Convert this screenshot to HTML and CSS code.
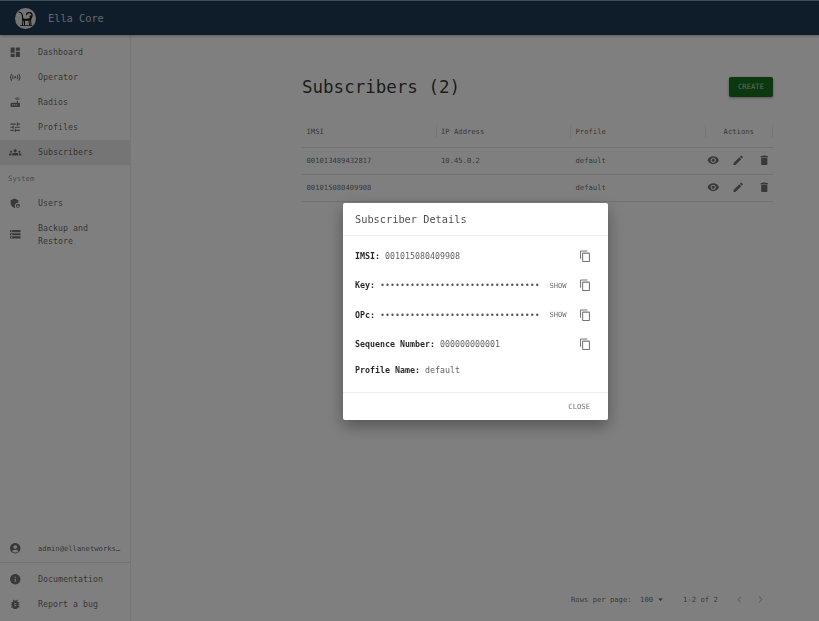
FILE: index.html
```html
<!DOCTYPE html>
<html lang="en">
<head>
<meta charset="utf-8">
<title>Ella Core – Subscribers</title>
<link rel="stylesheet" href="styles.css">
</head>
<body>
<svg class="sprite" aria-hidden="true">
  <symbol id="i-dashboard" viewBox="0 0 24 24"><path d="M3 13h8V3H3zm0 8h8v-6H3zm10 0h8V11h-8zm0-18v6h8V3z"/></symbol>
  <symbol id="i-sensors" viewBox="0 0 24 24"><path d="M7.76 16.24C6.67 15.16 6 13.66 6 12s.67-3.16 1.76-4.24l1.42 1.42C8.45 9.9 8 10.9 8 12c0 1.1.45 2.1 1.17 2.83zm8.48 0C17.33 15.16 18 13.66 18 12s-.67-3.16-1.76-4.24l-1.42 1.42C15.55 9.9 16 10.9 16 12c0 1.1-.45 2.1-1.17 2.83zM12 10c-1.1 0-2 .9-2 2s.9 2 2 2 2-.9 2-2-.9-2-2-2m8 2c0 2.21-.9 4.21-2.35 5.65l1.42 1.42C20.88 17.26 22 14.76 22 12s-1.12-5.26-2.93-7.07l-1.42 1.42C19.1 7.79 20 9.79 20 12M6.35 6.35 4.93 4.93C3.12 6.74 2 9.24 2 12s1.12 5.26 2.93 7.07l1.42-1.42C4.9 16.21 4 14.21 4 12s.9-4.21 2.35-5.65"/></symbol>
  <symbol id="i-router" viewBox="0 0 24 24"><path d="M20.2 5.9l.8-.8C19.6 3.7 17.8 3 16 3s-3.6.7-5 2.1l.8.8C13 4.8 14.5 4.2 16 4.2s3 .6 4.2 1.7zm-.9.8c-.9-.9-2.1-1.4-3.3-1.4s-2.4.5-3.3 1.4l.8.8c.7-.7 1.6-1 2.5-1 .9 0 1.8.3 2.5 1l.8-.8zM19 13h-2V9h-2v4H5c-1.1 0-2 .9-2 2v4c0 1.1.9 2 2 2h14c1.1 0 2-.9 2-2v-4c0-1.1-.9-2-2-2zM8 18H6v-2h2v2zm3.500 0h-2v-2h2v2zm3.500 0h-2v-2h2v2z"/></symbol>
  <symbol id="i-tune" viewBox="0 0 24 24"><path d="M3 17v2h6v-2zM3 5v2h10V5zm10 16v-2h8v-2h-8v-2h-2v6zM7 9v2H3v2h4v2h2V9zm14 4v-2H11v2zm-6-4h2V7h4V5h-4V3h-2z"/></symbol>
  <symbol id="i-groups" viewBox="0 0 24 24"><path d="M12 12.75c1.63 0 3.07.39 4.24.9 1.08.48 1.76 1.56 1.76 2.73V18H6v-1.61c0-1.18.68-2.26 1.76-2.73 1.17-.52 2.61-.91 4.24-.91M4 13c1.1 0 2-.9 2-2s-.9-2-2-2-2 .9-2 2 .9 2 2 2m1.130 1.100c-.37-.06-.74-.1-1.130-.1-.99 0-1.930.21-2.780.58C.48 14.900 0 15.620 0 16.430V18h4.500v-1.610c0-.83.23-1.610.63-2.290M20 13c1.100 0 2-.9 2-2s-.9-2-2-2-2 .9-2 2 .9 2 2 2m4 3.430c0-.81-.48-1.530-1.220-1.850-.85-.37-1.790-.58-2.780-.58-.39 0-.76.04-1.130.1.4.68.63 1.460.63 2.290V18H24zM12 6c1.660 0 3 1.340 3 3s-1.340 3-3 3-3-1.340-3-3 1.340-3 3-3"/></symbol>
  <symbol id="i-admin" viewBox="0 0 24 24"><path d="M17 11c.34 0 .67.04 1 .09V6.270L10.500 3 3 6.270v4.910c0 4.540 3.200 8.790 7.500 9.820.55-.13 1.080-.32 1.600-.55-.69-.98-1.100-2.170-1.100-3.450 0-3.310 2.690-6 6-6"/><path d="M17 13c-2.210 0-4 1.790-4 4s1.790 4 4 4 4-1.790 4-4-1.790-4-4-4m0 1.380c.62 0 1.120.51 1.120 1.120s-.51 1.120-1.120 1.120-1.120-.51-1.120-1.120.5-1.120 1.120-1.120m0 5.370c-.93 0-1.740-.46-2.240-1.170.05-.72 1.510-1.080 2.240-1.080s2.190.36 2.240 1.080c-.5.71-1.310 1.170-2.240 1.170"/></symbol>
  <symbol id="i-storage" viewBox="0 0 24 24"><path d="M2 20h20v-4H2zm2-3h2v2H4zM2 4v4h20V4zm4 3H4V5h2zm-4 7h20v-4H2zm2-3h2v2H4z"/></symbol>
  <symbol id="i-account" viewBox="0 0 24 24"><path d="M12 2C6.480 2 2 6.480 2 12s4.480 10 10 10 10-4.480 10-10S17.520 2 12 2m0 4c1.930 0 3.500 1.570 3.500 3.500S13.930 13 12 13s-3.500-1.570-3.500-3.500S10.070 6 12 6m0 14c-2.030 0-4.430-.82-6.140-2.880C7.550 15.800 9.680 15 12 15s4.450.8 6.140 2.120C16.430 19.180 14.030 20 12 20"/></symbol>
  <symbol id="i-info" viewBox="0 0 24 24"><path d="M12 2C6.480 2 2 6.480 2 12s4.480 10 10 10 10-4.480 10-10S17.520 2 12 2m1 15h-2v-6h2zm0-8h-2V7h2z"/></symbol>
  <symbol id="i-bug" viewBox="0 0 24 24"><path d="M20 8h-2.810c-.45-.78-1.070-1.450-1.820-1.960L17 4.410 15.590 3l-2.170 2.170C12.960 5.060 12.490 5 12 5c-.49 0-.96.06-1.410.17L8.410 3 7 4.410l1.620 1.630C7.880 6.550 7.260 7.220 6.810 8H4v2h2.090c-.05.33-.09.66-.09 1v1H4v2h2v1c0 .34.04.67.09 1H4v2h2.810c1.040 1.790 2.970 3 5.190 3s4.150-1.210 5.190-3H20v-2h-2.090c.05-.33.09-.66.09-1v-1h2v-2h-2v-1c0-.34-.04-.67-.09-1H20zm-6 8h-4v-2h4zm0-4h-4v-2h4z"/></symbol>
  <symbol id="i-eye" viewBox="0 0 24 24"><path d="M12 4.500C7 4.500 2.730 7.610 1 12c1.730 4.390 6 7.500 11 7.500s9.270-3.110 11-7.500c-1.730-4.390-6-7.500-11-7.500M12 17c-2.760 0-5-2.240-5-5s2.240-5 5-5 5 2.240 5 5-2.240 5-5 5m0-8c-1.660 0-3 1.340-3 3s1.340 3 3 3 3-1.340 3-3-1.340-3-3-3"/></symbol>
  <symbol id="i-edit" viewBox="0 0 24 24"><path d="M3 17.250V21h3.750L17.810 9.940l-3.750-3.750zM20.710 7.040c.39-.39.39-1.020 0-1.410l-2.340-2.340a.9959.9959 0 0 0-1.410 0l-1.830 1.830 3.750 3.750z"/></symbol>
  <symbol id="i-delete" viewBox="0 0 24 24"><path d="M6 19c0 1.100.9 2 2 2h8c1.100 0 2-.9 2-2V7H6zM19 4h-3.500l-1-1h-5l-1 1H5v2h14z"/></symbol>
  <symbol id="i-copy" viewBox="0 0 24 24"><path d="M16 1H4c-1.100 0-2 .9-2 2v14h2V3h12zm3 4H8c-1.100 0-2 .9-2 2v14c0 1.100.9 2 2 2h11c1.100 0 2-.9 2-2V7c0-1.100-.9-2-2-2m0 16H8V7h11z"/></symbol>
  <symbol id="i-left" viewBox="0 0 24 24"><path d="M15.410 7.410 14 6l-6 6 6 6 1.410-1.410L10.830 12z"/></symbol>
  <symbol id="i-right" viewBox="0 0 24 24"><path d="M10 6 8.590 7.410 13.170 12l-4.580 4.590L10 18l6-6z"/></symbol>
  <symbol id="i-caret" viewBox="0 0 24 24"><path d="m7 10 5 5 5-5z"/></symbol>
</svg>

<div class="app">
  <header class="topbar">
    <svg class="logo" viewBox="0 0 42 42" aria-hidden="true">
      <circle cx="21" cy="21" r="21" fill="#e8e8e8"/>
      <g fill="none" stroke="#111" stroke-linecap="round" stroke-linejoin="round">
        <path stroke-width="2.500" d="M8 8c4 1 7 4 7 9 0 3 1 5 1 8"/>
        <path stroke-width="2.500" d="M23 13c1-4 7-5 10-2 2 3 1 6-1 8"/>
        <path stroke-width="4" d="M16 23c5 1 10 1 15-1 1-1 1-3 0-5"/>
        <path stroke-width="2" d="M16 25l-1 9M19 26v8M28 25l1 9M31 23l1 11"/>
        <path stroke-width="1.500" d="M11 35h23"/>
      </g>
    </svg>
    <span class="brand">Ella Core</span>
  </header>

  <div class="layout">
    <aside class="drawer">
      <nav class="nav-list">
        <a class="nav-item"><svg class="nav-icon"><use href="#i-dashboard"/></svg><span>Dashboard</span></a>
        <a class="nav-item"><svg class="nav-icon"><use href="#i-sensors"/></svg><span>Operator</span></a>
        <a class="nav-item"><svg class="nav-icon"><use href="#i-router"/></svg><span>Radios</span></a>
        <a class="nav-item"><svg class="nav-icon"><use href="#i-tune"/></svg><span>Profiles</span></a>
        <a class="nav-item is-active"><svg class="nav-icon"><use href="#i-groups"/></svg><span>Subscribers</span></a>
        <div class="nav-section">System</div>
        <a class="nav-item"><svg class="nav-icon"><use href="#i-admin"/></svg><span>Users</span></a>
        <a class="nav-item nav-item-tall"><svg class="nav-icon"><use href="#i-storage"/></svg><span>Backup and<br>Restore</span></a>
      </nav>
      <div class="nav-bottom">
        <a class="nav-item nav-account"><svg class="nav-icon"><use href="#i-account"/></svg><span class="account-name">admin@ellanetworks…</span></a>
        <a class="nav-item"><svg class="nav-icon"><use href="#i-info"/></svg><span>Documentation</span></a>
        <a class="nav-item"><svg class="nav-icon"><use href="#i-bug"/></svg><span>Report a bug</span></a>
      </div>
    </aside>

    <main class="main">
      <div class="page-head">
        <h1 class="page-title">Subscribers (2)</h1>
        <button class="btn-create">CREATE</button>
      </div>
      <table class="grid">
        <thead>
          <tr>
            <th class="col"><span class="th-in">IMSI</span></th>
            <th class="col"><span class="th-in">IP Address</span></th>
            <th class="col"><span class="th-in">Profile</span></th>
            <th class="col-actions"><span class="th-in th-center">Actions</span></th>
          </tr>
        </thead>
        <tbody>
          <tr>
            <td>001013489432817</td><td>10.45.0.2</td><td>default</td>
            <td><div class="actions"><svg class="act"><use href="#i-eye"/></svg><svg class="act"><use href="#i-edit"/></svg><svg class="act"><use href="#i-delete"/></svg></div></td>
          </tr>
          <tr>
            <td>001015080409908</td><td></td><td>default</td>
            <td><div class="actions"><svg class="act"><use href="#i-eye"/></svg><svg class="act"><use href="#i-edit"/></svg><svg class="act"><use href="#i-delete"/></svg></div></td>
          </tr>
        </tbody>
      </table>
      <div class="pager">
        <span>Rows per page:</span>
        <span class="pager-size">100<svg class="caret"><use href="#i-caret"/></svg></span>
        <span class="pager-range">1-2 of 2</span>
        <svg class="chev"><use href="#i-left"/></svg>
        <svg class="chev"><use href="#i-right"/></svg>
      </div>
    </main>
  </div>
</div>

<div class="backdrop">
  <section class="dialog" role="dialog" aria-label="Subscriber Details">
    <h2 class="dialog-title">Subscriber Details</h2>
    <div class="dialog-body">
      <div class="field"><span class="field-text"><b>IMSI:</b> 001015080409908</span><svg class="copy"><use href="#i-copy"/></svg></div>
      <div class="field"><span class="field-text"><b>Key:</b> ••••••••••••••••••••••••••••••••</span><span class="show">SHOW</span><svg class="copy"><use href="#i-copy"/></svg></div>
      <div class="field"><span class="field-text"><b>OPc:</b> ••••••••••••••••••••••••••••••••</span><span class="show">SHOW</span><svg class="copy"><use href="#i-copy"/></svg></div>
      <div class="field"><span class="field-text"><b>Sequence Number:</b> 000000000001</span><svg class="copy"><use href="#i-copy"/></svg></div>
      <div class="field field-plain"><span class="field-text"><b>Profile Name:</b> default</span></div>
    </div>
    <div class="dialog-foot"><span class="close">CLOSE</span></div>
  </section>
</div>
</body>
</html>
```
FILE: styles.css
```css
* { box-sizing: border-box; }
html, body { margin: 0; height: 100%; }
body {
  font-family: "DejaVu Sans Mono", "Liberation Mono", monospace;
  font-size: 8.3px;
  color: rgba(0, 0, 0, .65);
  background: #fff;
  overflow: hidden;
}
.sprite { display: none; }
svg { fill: currentColor; flex: none; }

.app { height: 621px; display: flex; flex-direction: column; }

.topbar {
  height: 35px;
  flex: none;
  display: flex;
  align-items: center;
  gap: 12px;
  padding: 0 0 0 15px;
  background: #1e3a54;
  border-top: 1px solid #7f9db0;
  color: rgba(255, 255, 255, .75);
  box-shadow: 0 1px 3px rgba(0, 0, 0, .3);
  position: relative;
}
.logo { width: 21px; height: 21px; }
.brand { font-size: 10.3px; }

.layout { flex: 1; display: flex; min-height: 0; }

.drawer {
  width: 131px;
  flex: none;
  display: flex;
  flex-direction: column;
  border-right: 1px solid #ececec;
}
.nav-list { padding-top: 5px; flex: 1; }
.nav-item {
  height: 25px;
  display: flex;
  align-items: center;
  padding-left: 9px;
  color: rgba(0, 0, 0, .62);
  line-height: 13px;
}
.nav-item-tall { height: 37px; }
.is-active { background: rgba(0, 0, 0, .08); }
.nav-icon {
  width: 12.500px;
  height: 12.500px;
  margin-right: 16.500px;
  color: rgba(0, 0, 0, .55);
}
.nav-section {
  height: 26px;
  padding-left: 8px;
  display: flex;
  align-items: center;
  font-size: 7.3px;
  color: rgba(0, 0, 0, .45);
}
.nav-bottom { padding-bottom: 4px; }
.nav-account {
  border-bottom: 1px solid #e6e6e6;
  height: 28px;
  margin-bottom: 4px;
}
.account-name { font-size: 7.2px; }

.main {
  flex: 1;
  min-width: 0;
  display: flex;
  flex-direction: column;
  padding: 42px 46px 0 171px;
}
.page-head {
  display: flex;
  align-items: center;
  justify-content: space-between;
  height: 20px;
  margin-bottom: 20px;
}
.page-title { margin: 0; font-size: 17.500px; font-weight: 400; color: rgba(0, 0, 0, .8); }
.btn-create {
  width: 44px;
  height: 20px;
  padding: 0 0 1px;
  border: 0;
  border-radius: 2px;
  background: #17701f;
  color: rgba(255, 255, 255, .7);
  font: 7.2px "DejaVu Sans Mono", "Liberation Mono", monospace;
  box-shadow: 0 1px 3px rgba(0, 0, 0, .35);
}

.grid {
  width: 471px;
  table-layout: fixed;
  border-collapse: collapse;
  font-size: 7.2px;
}
.grid th {
  height: 30px;
  padding: 0;
  font-weight: 400;
  text-align: left;
  border-bottom: 1px solid #e4e4e4;
}
.col { width: 134.500px; }
.col-actions { width: 67.500px; }
.th-in {
  display: block;
  line-height: 13px;
  padding-left: 4.500px;
  border-right: 1px solid #ececec;
  color: rgba(0, 0, 0, .62);
}
.th-center { text-align: center; padding-left: 0; }
.grid td {
  height: 27px;
  padding: 0 0 0 4.500px;
  border-bottom: 1px solid #e4e4e4;
  color: rgba(0, 0, 0, .62);
}
.actions { display: flex; justify-content: flex-end; gap: 13px; padding-right: 3px; }
.act { width: 12.500px; height: 12.500px; color: rgba(0, 0, 0, .55); }

.pager {
  margin-top: auto;
  height: 43px;
  padding-bottom: 1px;
  display: flex;
  align-items: center;
  font-size: 7.2px;
  color: rgba(0, 0, 0, .6);
  padding-left: 269px;
}
.pager-size { display: inline-flex; align-items: center; margin-left: 8.500px; width: 43px; }
.caret { width: 11px; height: 11px; margin-left: 2px; }
.chev { width: 13px; height: 13px; color: rgba(0, 0, 0, .22); margin-left: 8px; }
.pager-range + .chev { margin-left: 15px; }

.backdrop {
  position: fixed;
  inset: 0;
  padding: 2px 0 0 132px;
  display: flex;
  align-items: center;
  justify-content: center;
  background: rgba(0, 0, 0, .5);
}
.dialog {
  width: 265px;
  height: 217px;
  background: #fff;
  border-radius: 2px;
  display: flex;
  flex-direction: column;
  box-shadow: 0 6px 16px rgba(0, 0, 0, .35);
}
.dialog-title {
  margin: 0;
  height: 33px;
  display: flex;
  align-items: center;
  padding-left: 12px;
  font-size: 10.300px;
  font-weight: 400;
  color: rgba(0, 0, 0, .72);
  border-bottom: 1px solid #eee;
}
.dialog-body { flex: 1; padding: 5px 17px 0 12px; }
.field {
  display: flex;
  align-items: center;
  height: 29.500px;
  color: rgba(0, 0, 0, .65);
}
.field-plain { height: 21px; }
.field-text { flex: 1; white-space: nowrap; }
.field-text b { color: rgba(0, 0, 0, .85); }
.show { font-size: 7.1px; color: rgba(0, 0, 0, .6); margin-right: 12px; }
.copy { width: 12.500px; height: 12.500px; color: rgba(0, 0, 0, .55); }
.dialog-foot {
  height: 28px;
  display: flex;
  align-items: center;
  justify-content: flex-end;
  padding-right: 18px;
  border-top: 1px solid #eee;
}
.close { font-size: 7.2px; color: rgba(0, 0, 0, .6); }
```
